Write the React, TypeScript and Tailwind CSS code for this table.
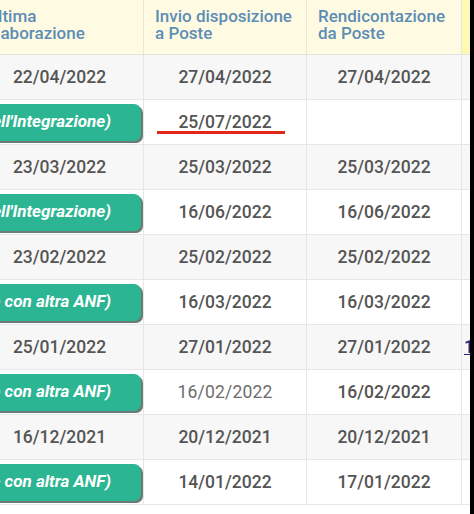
const rows: { badge?: string; c1?: string; c2: string; c3: string; c4?: string; underline?: boolean; faded?: boolean }[] = [
  { c1: "22/04/2022", c2: "27/04/2022", c3: "27/04/2022" },
  { badge: "Sospesa (in attesa dell'Integrazione)", c2: "25/07/2022", c3: "", underline: true },
  { c1: "23/03/2022", c2: "25/03/2022", c3: "25/03/2022" },
  { badge: "Sospesa (in attesa dell'Integrazione)", c2: "16/06/2022", c3: "16/06/2022" },
  { c1: "23/02/2022", c2: "25/02/2022", c3: "25/02/2022" },
  { badge: "Respinta (coniuge con altra ANF)", c2: "16/03/2022", c3: "16/03/2022" },
  { c1: "25/01/2022", c2: "27/01/2022", c3: "27/01/2022", c4: "1" },
  { badge: "Respinta (coniuge con altra ANF)", c2: "16/02/2022", c3: "16/02/2022", faded: true },
  { c1: "16/12/2021", c2: "20/12/2021", c3: "20/12/2021" },
  { badge: "Respinta (coniuge con altra ANF)", c2: "14/01/2022", c3: "17/01/2022" },
];

const cols = "grid grid-cols-[168px_163px_155px_40px]";

export default function App() {
  return (
    <div className="flex h-[514px] w-[474px] bg-white" style={{ fontFamily: "Roboto, 'Noto Sans', sans-serif" }}>
      <div className="relative w-[470px] overflow-hidden">
        <div className="ml-[-24px] w-[526px]">
          {/* HEADER */}
          <div className={`${cols} h-[55px] border-b border-[#e2e2de] text-[17px] font-medium leading-[17px] text-[#5d8db6]`}>
            <div className="bg-[#fffbe3] pl-[11px] pt-[8px] border-r border-[#ebe8cf] whitespace-nowrap">Ultima<br />elaborazione</div>
            <div className="bg-[#fffbe3] pl-[11px] pt-[8px] border-r border-[#ebe8cf] whitespace-nowrap">Invio disposizione<br />a Poste</div>
            <div className="bg-[#fffbe3] pl-[11px] pt-[8px] border-r border-[#ebe8cf] whitespace-nowrap">Rendicontazione<br />da Poste</div>
            <div className="bg-[#fdf9b4]"></div>
          </div>

          {/* ROWS */}
          {rows.map((r, i) => (
            <div
              key={i}
              className={`${cols} h-[45px] border-b border-[#e6e6e6] text-[17.5px] font-medium text-[#555555] ${r.badge ? "bg-white" : "bg-[#f7f7f7]"}`}
            >
              <div className="flex items-center justify-center border-r border-[#e6e6e6] pr-[2px]">
                {r.badge ? (
                  <div className="flex h-[37px] w-full items-center justify-end overflow-hidden whitespace-nowrap rounded-r-[7px] bg-[#2bb592] pr-[30px] text-[17px] font-bold italic text-white shadow-[2px_2px_0_#6b7a74]">
                    {r.badge}
                  </div>
                ) : (
                  <span className="pl-[2px]">{r.c1}</span>
                )}
              </div>
              <div className="relative flex items-center justify-center border-r border-[#e6e6e6]">
                <span className={r.faded ? "font-normal text-[#6d6d6d] tracking-[0.2px]" : ""}>{r.c2}</span>
                {r.underline && <div className="absolute bottom-[10px] left-[13px] h-[3px] w-[128px] bg-[#e2261b]"></div>}
              </div>
              <div className="flex items-center justify-center border-r border-[#e6e6e6]">{r.c3}</div>
              <div className="flex items-center pl-[2px]">
                {r.c4 && <span className="text-[#1a2a8a] underline">{r.c4}</span>}
              </div>
            </div>
          ))}
        </div>
      </div>
      <div className="w-[4px] bg-black"></div>
    </div>
  );
}
